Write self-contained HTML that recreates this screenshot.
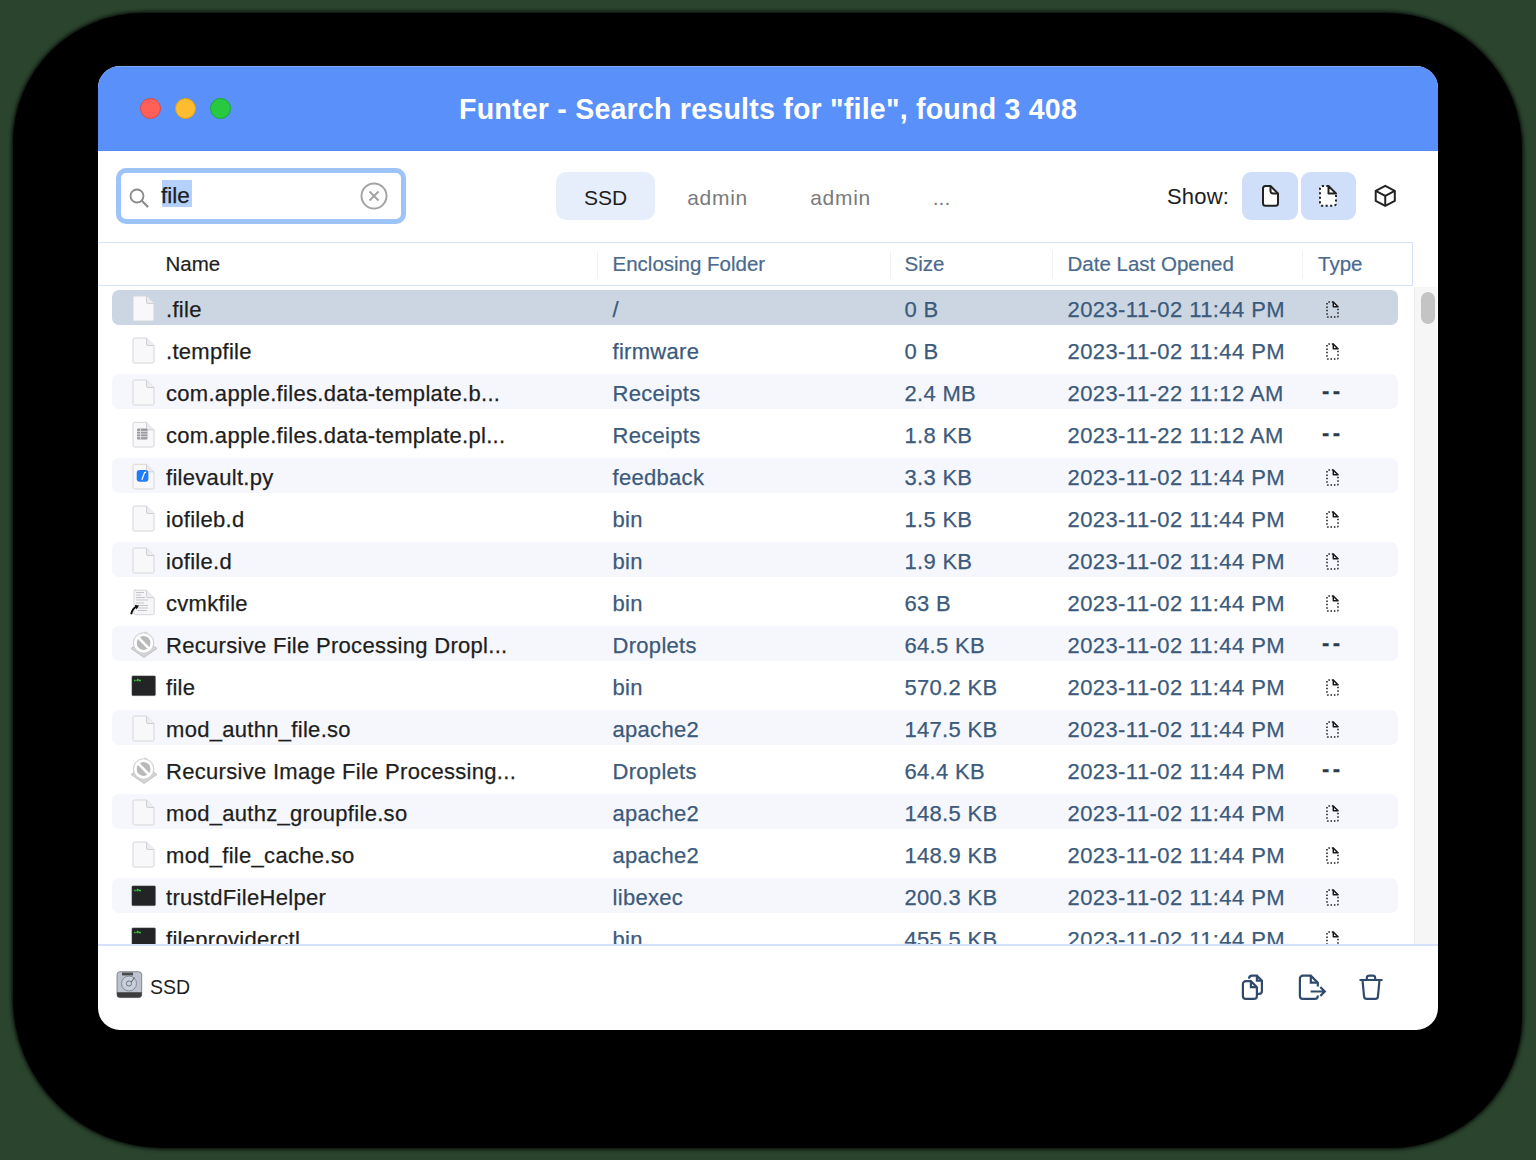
<!DOCTYPE html>
<html><head><meta charset="utf-8">
<style>
*{box-sizing:border-box;margin:0;padding:0}
html,body{width:1536px;height:1160px;overflow:hidden}
body{background:#2a442e;font-family:"Liberation Sans",sans-serif;position:relative}
#shadow{position:absolute;left:13px;top:13px;width:1509px;height:1135px;border-radius:130px 136px 132px 150px;background:#000;box-shadow:0 0 4px 1px #000}
#win{position:absolute;left:98px;top:66px;width:1340px;height:964px;border-radius:22px;background:#fff;overflow:hidden}
#title{position:absolute;left:0;top:0;width:1340px;height:84.5px;background:#5a90fa;border-top:1px solid #7ea8f9;border-bottom:1px solid #5489f7}
.tl{position:absolute;top:30.5px;width:21px;height:21px;border-radius:50%}
#ttext{position:absolute;left:0;width:1340px;top:26px;text-align:center;color:#fff;font-weight:bold;font-size:28.6px;line-height:32px;letter-spacing:0.2px}
.abs{position:absolute}
#search{position:absolute;left:18px;top:102px;width:290px;height:56px;border:5px solid #9dc3fb;border-radius:10px;background:#fff}
.tab{position:absolute;top:118.5px;font-size:21px;line-height:26px;color:#7a7a7c;text-align:center;width:120px}
#hdr{position:absolute;left:0;top:176px;width:1315px;height:44px;border-top:1.5px solid #d4e3fb;border-bottom:1.5px solid #d4e3fb;border-right:1.5px solid #d4e3fb}
.hd{position:absolute;top:9px;font-size:20.5px;line-height:24px;color:#4a6a8e;letter-spacing:0;-webkit-text-stroke:0.2px currentColor}
.vdiv{position:absolute;top:8px;width:1px;height:27px;background:#f1f1f3}
.row{position:absolute;left:14px;width:1286px;height:35px;border-radius:7px}
.row.sel{background:#cbd6e2}
.row.alt{background:#f6f7fd}
.c{position:absolute;top:2px;line-height:35px;font-size:22px;color:#3c5a7b;white-space:nowrap;letter-spacing:0.3px;-webkit-text-stroke:0.25px currentColor}
.c1{left:54px;color:#1e1e20;letter-spacing:0.3px}
.c2{left:500.5px}
.c3{left:792.5px}
.c4{left:955.5px;letter-spacing:0.42px}
.c5{left:1210px}
.c5 svg{position:absolute;top:8px;left:3.5px}
.dash{position:relative;top:-3px;left:0;color:#2a3a4c;letter-spacing:3.5px;font-weight:bold}
.ic{position:absolute;left:18px;top:4px}
.ic-term{top:4px}
.ic-droplet{left:17px;top:3px}
#scroll{position:absolute;left:1316px;top:221px;width:23px;height:658px;background:#f6f6f6;border-left:1px solid #ececec}
#thumb{position:absolute;left:1323px;top:226px;width:14px;height:32px;border-radius:7px;background:#c4c4c4}
#tbot{position:absolute;left:0;top:878px;width:1340px;height:1.5px;background:#d4e3fb}
#rows{position:absolute;left:0;top:221px;width:1315px;height:657px;overflow:hidden}
</style></head><body>
<div id="shadow"></div>
<div id="win">
  <div id="title">
    <div class="tl" style="left:42px;background:#fe5f57;border:0.5px solid #e2463f"></div>
    <div class="tl" style="left:76.5px;background:#febc2e;border:0.5px solid #e1a116"></div>
    <div class="tl" style="left:111.5px;background:#28c840;border:0.5px solid #1aab29"></div>
    <div id="ttext">Funter - Search results for "file", found 3 408</div>
  </div>
  <!-- toolbar -->
  <div id="search"></div>
  <svg class="abs" style="left:30px;top:121px" width="24" height="22" viewBox="0 0 24 22"><circle cx="9" cy="9" r="6.5" fill="none" stroke="#8a8a8c" stroke-width="1.8"/><path d="M13.8 13.8L19.5 19.5" stroke="#8a8a8c" stroke-width="2.2" stroke-linecap="round"/></svg>
  <div class="abs" style="left:63.5px;top:114px;width:30.5px;height:27px;background:#b4d1fb"></div>
  <div class="abs" style="left:63px;top:116.5px;font-size:22.5px;line-height:26px;color:#1e1e20;-webkit-text-stroke:0.25px #1e1e20">file</div>
  <svg class="abs" style="left:261px;top:115px" width="30" height="30" viewBox="0 0 30 30"><circle cx="15" cy="15" r="12.5" fill="none" stroke="#a4a4a6" stroke-width="2"/><path d="M10.5 10.5L19.5 19.5M19.5 10.5L10.5 19.5" stroke="#a4a4a6" stroke-width="2"/></svg>
  <div class="abs" style="left:458px;top:105.5px;width:99px;height:48.5px;border-radius:10px;background:#e6eefc"></div>
  <div class="tab" style="left:447.5px;color:#1e1e20">SSD</div>
  <div class="tab" style="left:559.6px;letter-spacing:0.7px">admin</div>
  <div class="tab" style="left:682.6px;letter-spacing:0.7px">admin</div>
  <div class="tab" style="left:783.5px">...</div>
  <div class="abs" style="left:1069px;top:117.5px;font-size:22px;line-height:26px;color:#1e1e20;letter-spacing:0.2px">Show:</div>
  <div class="abs" style="left:1144px;top:105.5px;width:55.5px;height:48.5px;border-radius:9px;background:#cfdffa"></div>
  <div class="abs" style="left:1202.5px;top:105.5px;width:55px;height:48.5px;border-radius:9px;background:#cfdffa"></div>
  <svg class="abs" style="left:1161px;top:117px" width="22" height="26" viewBox="0 0 22 26"><path d="M6 3h5.5l7.5 7.5v9.8a2.5 2.5 0 0 1-2.5 2.5h-10a2.5 2.5 0 0 1-2.5-2.5v-14.8a2.5 2.5 0 0 1 2.5-2.5z" fill="#fff" stroke="#222" stroke-width="2" stroke-linejoin="round"/><path d="M11.5 3v5a2.5 2.5 0 0 0 2.5 2.5h5" fill="none" stroke="#222" stroke-width="2"/></svg>
  <svg class="abs" style="left:1219px;top:117px" width="22" height="26" viewBox="0 0 22 26"><path d="M11.5 3h-6a2.5 2.5 0 0 0-2.5 2.5v14.8a2.5 2.5 0 0 0 2.5 2.5h11a2.5 2.5 0 0 0 2.5-2.5v-9.8" fill="#fff" stroke="#222" stroke-width="2" stroke-dasharray="2.2 2.3"/><path d="M11.5 3l7.5 7.5h-7.5z" fill="#fff" stroke="#222" stroke-width="2" stroke-linejoin="round"/></svg>
  <svg class="abs" style="left:1275px;top:117px" width="25" height="26" viewBox="0 0 25 26"><path d="M12.25 2.8L21.8 7.8v10L12.25 22.8L2.7 17.8v-10z" fill="none" stroke="#222" stroke-width="2" stroke-linejoin="round"/><path d="M2.7 7.8l9.55 5L21.8 7.8M12.25 12.8v10" fill="none" stroke="#222" stroke-width="2" stroke-linejoin="round"/></svg>
  <!-- header -->
  <div id="hdr">
    <span class="hd" style="left:67.5px;color:#1e1e20">Name</span>
    <div class="vdiv" style="left:499px"></div>
    <span class="hd" style="left:514.5px">Enclosing Folder</span>
    <div class="vdiv" style="left:791.5px"></div>
    <span class="hd" style="left:806.5px">Size</span>
    <div class="vdiv" style="left:954px"></div>
    <span class="hd" style="left:969.5px">Date Last Opened</span>
    <div class="vdiv" style="left:1204px"></div>
    <span class="hd" style="left:1220px">Type</span>
  </div>
  <div id="rows">
<div class="row sel" style="top:3px"><div class="ic ic-doc"><svg width="27" height="30" viewBox="0 0 27 30"><path d="M4.5 2h12l7.5 7.5v16a1.5 1.5 0 0 1-1.5 1.5h-18a1.5 1.5 0 0 1-1.5-1.5v-22a1.5 1.5 0 0 1 1.5-1.5z" fill="#f8f8fa" stroke="#d6d6da" stroke-width="1"/><path d="M16.5 2v6a1.5 1.5 0 0 0 1.5 1.5h6" fill="#ececf0" stroke="#cfcfd4" stroke-width="1"/></svg></div><span class="c c1">.file</span><span class="c c2">/</span><span class="c c3">0 B</span><span class="c c4">2023-11-02 11:44 PM</span><span class="c c5"><svg width="14" height="19" viewBox="0 0 14 19"><path d="M7.3 2.1H1.7a0.7 0.7 0 0 0-0.7 0.7V16.2a0.7 0.7 0 0 0 0.7 0.7H11.3a0.7 0.7 0 0 0 0.7-0.7V6.8" fill="none" stroke="#1a1a1a" stroke-width="1.5" stroke-dasharray="1.5 1.9"/><path d="M7.3 2.1L12 6.8H7.3z" fill="#fff" stroke="#1a1a1a" stroke-width="1.5" stroke-linejoin="round"/></svg></span></div>
<div class="row" style="top:45px"><div class="ic ic-doc"><svg width="27" height="30" viewBox="0 0 27 30"><path d="M4.5 2h12l7.5 7.5v16a1.5 1.5 0 0 1-1.5 1.5h-18a1.5 1.5 0 0 1-1.5-1.5v-22a1.5 1.5 0 0 1 1.5-1.5z" fill="#f8f8fa" stroke="#d6d6da" stroke-width="1"/><path d="M16.5 2v6a1.5 1.5 0 0 0 1.5 1.5h6" fill="#ececf0" stroke="#cfcfd4" stroke-width="1"/></svg></div><span class="c c1">.tempfile</span><span class="c c2">firmware</span><span class="c c3">0 B</span><span class="c c4">2023-11-02 11:44 PM</span><span class="c c5"><svg width="14" height="19" viewBox="0 0 14 19"><path d="M7.3 2.1H1.7a0.7 0.7 0 0 0-0.7 0.7V16.2a0.7 0.7 0 0 0 0.7 0.7H11.3a0.7 0.7 0 0 0 0.7-0.7V6.8" fill="none" stroke="#1a1a1a" stroke-width="1.5" stroke-dasharray="1.5 1.9"/><path d="M7.3 2.1L12 6.8H7.3z" fill="#fff" stroke="#1a1a1a" stroke-width="1.5" stroke-linejoin="round"/></svg></span></div>
<div class="row alt" style="top:87px"><div class="ic ic-doc"><svg width="27" height="30" viewBox="0 0 27 30"><path d="M4.5 2h12l7.5 7.5v16a1.5 1.5 0 0 1-1.5 1.5h-18a1.5 1.5 0 0 1-1.5-1.5v-22a1.5 1.5 0 0 1 1.5-1.5z" fill="#f8f8fa" stroke="#d6d6da" stroke-width="1"/><path d="M16.5 2v6a1.5 1.5 0 0 0 1.5 1.5h6" fill="#ececf0" stroke="#cfcfd4" stroke-width="1"/></svg></div><span class="c c1">com.apple.files.data-template.b...</span><span class="c c2">Receipts</span><span class="c c3">2.4 MB</span><span class="c c4">2023-11-22 11:12 AM</span><span class="c c5"><span class="dash">--</span></span></div>
<div class="row" style="top:129px"><div class="ic ic-plist"><svg width="27" height="30" viewBox="0 0 27 30"><path d="M4.5 2.3h12l7.5 7.5v15.7a1.5 1.5 0 0 1-1.5 1.5h-18a1.5 1.5 0 0 1-1.5-1.5v-21.7a1.5 1.5 0 0 1 1.5-1.5z" fill="#f8f8fa" stroke="#d6d6da" stroke-width="1"/><path d="M16.5 2.3v6a1.5 1.5 0 0 0 1.5 1.5h6" fill="#ececf0" stroke="#cfcfd4" stroke-width="1"/><rect x="7" y="8.5" width="10.5" height="11" rx="1" fill="#9a9a9e"/><path d="M7 11.4h10.5M7 14h10.5M7 16.7h10.5M10.5 8.5v11" stroke="#e4e4e6" stroke-width="0.9"/></svg></div><span class="c c1">com.apple.files.data-template.pl...</span><span class="c c2">Receipts</span><span class="c c3">1.8 KB</span><span class="c c4">2023-11-22 11:12 AM</span><span class="c c5"><span class="dash">--</span></span></div>
<div class="row alt" style="top:171px"><div class="ic ic-py"><svg width="27" height="30" viewBox="0 0 27 30"><path d="M4.5 2.3h12l7.5 7.5v15.7a1.5 1.5 0 0 1-1.5 1.5h-18a1.5 1.5 0 0 1-1.5-1.5v-21.7a1.5 1.5 0 0 1 1.5-1.5z" fill="#f8f8fa" stroke="#d6d6da" stroke-width="1"/><path d="M16.5 2.3v6a1.5 1.5 0 0 0 1.5 1.5h6" fill="#ececf0" stroke="#cfcfd4" stroke-width="1"/><rect x="6.7" y="8" width="11.7" height="11.7" rx="3" fill="#1f7bff"/><path d="M14.8 10l-3 8" stroke="#fff" stroke-width="1.2"/><path d="M13.8 10.2l2.2-0.6 0.2 1.6z" fill="#fff"/></svg></div><span class="c c1">filevault.py</span><span class="c c2">feedback</span><span class="c c3">3.3 KB</span><span class="c c4">2023-11-02 11:44 PM</span><span class="c c5"><svg width="14" height="19" viewBox="0 0 14 19"><path d="M7.3 2.1H1.7a0.7 0.7 0 0 0-0.7 0.7V16.2a0.7 0.7 0 0 0 0.7 0.7H11.3a0.7 0.7 0 0 0 0.7-0.7V6.8" fill="none" stroke="#1a1a1a" stroke-width="1.5" stroke-dasharray="1.5 1.9"/><path d="M7.3 2.1L12 6.8H7.3z" fill="#fff" stroke="#1a1a1a" stroke-width="1.5" stroke-linejoin="round"/></svg></span></div>
<div class="row" style="top:213px"><div class="ic ic-doc"><svg width="27" height="30" viewBox="0 0 27 30"><path d="M4.5 2h12l7.5 7.5v16a1.5 1.5 0 0 1-1.5 1.5h-18a1.5 1.5 0 0 1-1.5-1.5v-22a1.5 1.5 0 0 1 1.5-1.5z" fill="#f8f8fa" stroke="#d6d6da" stroke-width="1"/><path d="M16.5 2v6a1.5 1.5 0 0 0 1.5 1.5h6" fill="#ececf0" stroke="#cfcfd4" stroke-width="1"/></svg></div><span class="c c1">iofileb.d</span><span class="c c2">bin</span><span class="c c3">1.5 KB</span><span class="c c4">2023-11-02 11:44 PM</span><span class="c c5"><svg width="14" height="19" viewBox="0 0 14 19"><path d="M7.3 2.1H1.7a0.7 0.7 0 0 0-0.7 0.7V16.2a0.7 0.7 0 0 0 0.7 0.7H11.3a0.7 0.7 0 0 0 0.7-0.7V6.8" fill="none" stroke="#1a1a1a" stroke-width="1.5" stroke-dasharray="1.5 1.9"/><path d="M7.3 2.1L12 6.8H7.3z" fill="#fff" stroke="#1a1a1a" stroke-width="1.5" stroke-linejoin="round"/></svg></span></div>
<div class="row alt" style="top:255px"><div class="ic ic-doc"><svg width="27" height="30" viewBox="0 0 27 30"><path d="M4.5 2h12l7.5 7.5v16a1.5 1.5 0 0 1-1.5 1.5h-18a1.5 1.5 0 0 1-1.5-1.5v-22a1.5 1.5 0 0 1 1.5-1.5z" fill="#f8f8fa" stroke="#d6d6da" stroke-width="1"/><path d="M16.5 2v6a1.5 1.5 0 0 0 1.5 1.5h6" fill="#ececf0" stroke="#cfcfd4" stroke-width="1"/></svg></div><span class="c c1">iofile.d</span><span class="c c2">bin</span><span class="c c3">1.9 KB</span><span class="c c4">2023-11-02 11:44 PM</span><span class="c c5"><svg width="14" height="19" viewBox="0 0 14 19"><path d="M7.3 2.1H1.7a0.7 0.7 0 0 0-0.7 0.7V16.2a0.7 0.7 0 0 0 0.7 0.7H11.3a0.7 0.7 0 0 0 0.7-0.7V6.8" fill="none" stroke="#1a1a1a" stroke-width="1.5" stroke-dasharray="1.5 1.9"/><path d="M7.3 2.1L12 6.8H7.3z" fill="#fff" stroke="#1a1a1a" stroke-width="1.5" stroke-linejoin="round"/></svg></span></div>
<div class="row" style="top:297px"><div class="ic ic-alias"><svg width="27" height="30" viewBox="0 0 27 30"><path d="M4 2.2h12.5l7.7 7.7v15.3a1.5 1.5 0 0 1-1.5 1.5h-17.2a1.5 1.5 0 0 1-1.5-1.5v-21.5a1.5 1.5 0 0 1 1.5-1.5z" fill="#f6f6f8" stroke="#d6d6da" stroke-width="1"/><path d="M16.5 2.2v6a1.5 1.5 0 0 0 1.5 1.5h6" fill="#ececf0" stroke="#cfcfd4" stroke-width="1"/><path d="M6 4.5h8M6 7h5M6 9.5h9M6 12h12M6 15h8M6 17.5h12M8 20h10M8 22.5h9" stroke="#c4c4c8" stroke-width="1.1"/><path d="M1.2 26.2c0.8-4 2.6-6.6 6-7.8" fill="none" stroke="#111" stroke-width="2"/><path d="M4.8 16.8l4.2 1-2.6 3.6z" fill="#111"/></svg></div><span class="c c1">cvmkfile</span><span class="c c2">bin</span><span class="c c3">63 B</span><span class="c c4">2023-11-02 11:44 PM</span><span class="c c5"><svg width="14" height="19" viewBox="0 0 14 19"><path d="M7.3 2.1H1.7a0.7 0.7 0 0 0-0.7 0.7V16.2a0.7 0.7 0 0 0 0.7 0.7H11.3a0.7 0.7 0 0 0 0.7-0.7V6.8" fill="none" stroke="#1a1a1a" stroke-width="1.5" stroke-dasharray="1.5 1.9"/><path d="M7.3 2.1L12 6.8H7.3z" fill="#fff" stroke="#1a1a1a" stroke-width="1.5" stroke-linejoin="round"/></svg></span></div>
<div class="row alt" style="top:339px"><div class="ic ic-droplet"><svg width="30" height="30" viewBox="0 0 30 30"><path d="M15 10.5L28 19.5L15 28.4L2 19.5z" fill="#d4d4d6" stroke="#c4c4c6" stroke-width="1"/><circle cx="16.7" cy="4.6" r="1.6" fill="#e6e6e8" stroke="#c8c8ca" stroke-width="0.6"/><circle cx="14.6" cy="14" r="10.3" fill="#e9e9eb" stroke="#c8c8ca" stroke-width="0.8"/><circle cx="14.6" cy="14" r="7.2" fill="#b9b9bb"/><circle cx="14.6" cy="14" r="8.2" fill="none" stroke="#fff" stroke-width="2.4"/><path d="M9.2 8.4L20 19.6" stroke="#fff" stroke-width="2.6"/></svg></div><span class="c c1">Recursive File Processing Dropl...</span><span class="c c2">Droplets</span><span class="c c3">64.5 KB</span><span class="c c4">2023-11-02 11:44 PM</span><span class="c c5"><span class="dash">--</span></span></div>
<div class="row" style="top:381px"><div class="ic ic-term"><svg width="27" height="26" viewBox="0 0 27 26"><rect x="2" y="4" width="23.3" height="19.6" rx="0.8" fill="#232426"/><rect x="2" y="4" width="23.3" height="19.6" rx="0.8" fill="none" stroke="#3a3a3c" stroke-width="0.6"/><path d="M4.2 8.5h1.4M6.8 9l1.4-2.2M8.6 8.5h2.2" stroke="#2fe03c" stroke-width="1.4"/></svg></div><span class="c c1">file</span><span class="c c2">bin</span><span class="c c3">570.2 KB</span><span class="c c4">2023-11-02 11:44 PM</span><span class="c c5"><svg width="14" height="19" viewBox="0 0 14 19"><path d="M7.3 2.1H1.7a0.7 0.7 0 0 0-0.7 0.7V16.2a0.7 0.7 0 0 0 0.7 0.7H11.3a0.7 0.7 0 0 0 0.7-0.7V6.8" fill="none" stroke="#1a1a1a" stroke-width="1.5" stroke-dasharray="1.5 1.9"/><path d="M7.3 2.1L12 6.8H7.3z" fill="#fff" stroke="#1a1a1a" stroke-width="1.5" stroke-linejoin="round"/></svg></span></div>
<div class="row alt" style="top:423px"><div class="ic ic-doc"><svg width="27" height="30" viewBox="0 0 27 30"><path d="M4.5 2h12l7.5 7.5v16a1.5 1.5 0 0 1-1.5 1.5h-18a1.5 1.5 0 0 1-1.5-1.5v-22a1.5 1.5 0 0 1 1.5-1.5z" fill="#f8f8fa" stroke="#d6d6da" stroke-width="1"/><path d="M16.5 2v6a1.5 1.5 0 0 0 1.5 1.5h6" fill="#ececf0" stroke="#cfcfd4" stroke-width="1"/></svg></div><span class="c c1">mod_authn_file.so</span><span class="c c2">apache2</span><span class="c c3">147.5 KB</span><span class="c c4">2023-11-02 11:44 PM</span><span class="c c5"><svg width="14" height="19" viewBox="0 0 14 19"><path d="M7.3 2.1H1.7a0.7 0.7 0 0 0-0.7 0.7V16.2a0.7 0.7 0 0 0 0.7 0.7H11.3a0.7 0.7 0 0 0 0.7-0.7V6.8" fill="none" stroke="#1a1a1a" stroke-width="1.5" stroke-dasharray="1.5 1.9"/><path d="M7.3 2.1L12 6.8H7.3z" fill="#fff" stroke="#1a1a1a" stroke-width="1.5" stroke-linejoin="round"/></svg></span></div>
<div class="row" style="top:465px"><div class="ic ic-droplet"><svg width="30" height="30" viewBox="0 0 30 30"><path d="M15 10.5L28 19.5L15 28.4L2 19.5z" fill="#d4d4d6" stroke="#c4c4c6" stroke-width="1"/><circle cx="16.7" cy="4.6" r="1.6" fill="#e6e6e8" stroke="#c8c8ca" stroke-width="0.6"/><circle cx="14.6" cy="14" r="10.3" fill="#e9e9eb" stroke="#c8c8ca" stroke-width="0.8"/><circle cx="14.6" cy="14" r="7.2" fill="#b9b9bb"/><circle cx="14.6" cy="14" r="8.2" fill="none" stroke="#fff" stroke-width="2.4"/><path d="M9.2 8.4L20 19.6" stroke="#fff" stroke-width="2.6"/></svg></div><span class="c c1">Recursive Image File Processing...</span><span class="c c2">Droplets</span><span class="c c3">64.4 KB</span><span class="c c4">2023-11-02 11:44 PM</span><span class="c c5"><span class="dash">--</span></span></div>
<div class="row alt" style="top:507px"><div class="ic ic-doc"><svg width="27" height="30" viewBox="0 0 27 30"><path d="M4.5 2h12l7.5 7.5v16a1.5 1.5 0 0 1-1.5 1.5h-18a1.5 1.5 0 0 1-1.5-1.5v-22a1.5 1.5 0 0 1 1.5-1.5z" fill="#f8f8fa" stroke="#d6d6da" stroke-width="1"/><path d="M16.5 2v6a1.5 1.5 0 0 0 1.5 1.5h6" fill="#ececf0" stroke="#cfcfd4" stroke-width="1"/></svg></div><span class="c c1">mod_authz_groupfile.so</span><span class="c c2">apache2</span><span class="c c3">148.5 KB</span><span class="c c4">2023-11-02 11:44 PM</span><span class="c c5"><svg width="14" height="19" viewBox="0 0 14 19"><path d="M7.3 2.1H1.7a0.7 0.7 0 0 0-0.7 0.7V16.2a0.7 0.7 0 0 0 0.7 0.7H11.3a0.7 0.7 0 0 0 0.7-0.7V6.8" fill="none" stroke="#1a1a1a" stroke-width="1.5" stroke-dasharray="1.5 1.9"/><path d="M7.3 2.1L12 6.8H7.3z" fill="#fff" stroke="#1a1a1a" stroke-width="1.5" stroke-linejoin="round"/></svg></span></div>
<div class="row" style="top:549px"><div class="ic ic-doc"><svg width="27" height="30" viewBox="0 0 27 30"><path d="M4.5 2h12l7.5 7.5v16a1.5 1.5 0 0 1-1.5 1.5h-18a1.5 1.5 0 0 1-1.5-1.5v-22a1.5 1.5 0 0 1 1.5-1.5z" fill="#f8f8fa" stroke="#d6d6da" stroke-width="1"/><path d="M16.5 2v6a1.5 1.5 0 0 0 1.5 1.5h6" fill="#ececf0" stroke="#cfcfd4" stroke-width="1"/></svg></div><span class="c c1">mod_file_cache.so</span><span class="c c2">apache2</span><span class="c c3">148.9 KB</span><span class="c c4">2023-11-02 11:44 PM</span><span class="c c5"><svg width="14" height="19" viewBox="0 0 14 19"><path d="M7.3 2.1H1.7a0.7 0.7 0 0 0-0.7 0.7V16.2a0.7 0.7 0 0 0 0.7 0.7H11.3a0.7 0.7 0 0 0 0.7-0.7V6.8" fill="none" stroke="#1a1a1a" stroke-width="1.5" stroke-dasharray="1.5 1.9"/><path d="M7.3 2.1L12 6.8H7.3z" fill="#fff" stroke="#1a1a1a" stroke-width="1.5" stroke-linejoin="round"/></svg></span></div>
<div class="row alt" style="top:591px"><div class="ic ic-term"><svg width="27" height="26" viewBox="0 0 27 26"><rect x="2" y="4" width="23.3" height="19.6" rx="0.8" fill="#232426"/><rect x="2" y="4" width="23.3" height="19.6" rx="0.8" fill="none" stroke="#3a3a3c" stroke-width="0.6"/><path d="M4.2 8.5h1.4M6.8 9l1.4-2.2M8.6 8.5h2.2" stroke="#2fe03c" stroke-width="1.4"/></svg></div><span class="c c1">trustdFileHelper</span><span class="c c2">libexec</span><span class="c c3">200.3 KB</span><span class="c c4">2023-11-02 11:44 PM</span><span class="c c5"><svg width="14" height="19" viewBox="0 0 14 19"><path d="M7.3 2.1H1.7a0.7 0.7 0 0 0-0.7 0.7V16.2a0.7 0.7 0 0 0 0.7 0.7H11.3a0.7 0.7 0 0 0 0.7-0.7V6.8" fill="none" stroke="#1a1a1a" stroke-width="1.5" stroke-dasharray="1.5 1.9"/><path d="M7.3 2.1L12 6.8H7.3z" fill="#fff" stroke="#1a1a1a" stroke-width="1.5" stroke-linejoin="round"/></svg></span></div>
<div class="row" style="top:633px"><div class="ic ic-term"><svg width="27" height="26" viewBox="0 0 27 26"><rect x="2" y="4" width="23.3" height="19.6" rx="0.8" fill="#232426"/><rect x="2" y="4" width="23.3" height="19.6" rx="0.8" fill="none" stroke="#3a3a3c" stroke-width="0.6"/><path d="M4.2 8.5h1.4M6.8 9l1.4-2.2M8.6 8.5h2.2" stroke="#2fe03c" stroke-width="1.4"/></svg></div><span class="c c1">fileproviderctl</span><span class="c c2">bin</span><span class="c c3">455.5 KB</span><span class="c c4">2023-11-02 11:44 PM</span><span class="c c5"><svg width="14" height="19" viewBox="0 0 14 19"><path d="M7.3 2.1H1.7a0.7 0.7 0 0 0-0.7 0.7V16.2a0.7 0.7 0 0 0 0.7 0.7H11.3a0.7 0.7 0 0 0 0.7-0.7V6.8" fill="none" stroke="#1a1a1a" stroke-width="1.5" stroke-dasharray="1.5 1.9"/><path d="M7.3 2.1L12 6.8H7.3z" fill="#fff" stroke="#1a1a1a" stroke-width="1.5" stroke-linejoin="round"/></svg></span></div>
  </div>
  <div id="scroll"></div>
  <div id="thumb"></div>
  <div id="tbot"></div>
  <!-- footer -->
  <svg class="abs" style="left:18px;top:905px" width="27" height="28" viewBox="0 0 27 28"><rect x="1" y="0.7" width="24.7" height="25.9" rx="3" fill="#bcc3ce" stroke="#6e7278" stroke-width="0.8"/><rect x="6" y="1.6" width="11" height="2.8" fill="#4a4a4c"/><circle cx="13" cy="12.5" r="7.5" fill="#c9d0da" stroke="#858b94" stroke-width="1"/><circle cx="13" cy="12.5" r="2.6" fill="none" stroke="#6e747c" stroke-width="1"/><path d="M18.5 6.5l-3.2 4.6" stroke="#555" stroke-width="1"/><path d="M1 21.2h24.7v2.4a3 3 0 0 1-3 3h-18.7a3 3 0 0 1-3-3z" fill="#3c3c3e"/></svg>
  <div class="abs" style="left:52px;top:909px;font-size:19.5px;line-height:24px;color:#1e1e20">SSD</div>
  <svg class="abs" style="left:1142px;top:907px" width="26" height="30" viewBox="0 0 26 30"><path d="M9.1 5.7a3 3 0 0 1 3-3h4.8l5 5v10.2a3 3 0 0 1-3 3h-2.3" fill="none" stroke="#2f4a6c" stroke-width="2.2"/><path d="M16.9 2.7v5h5" fill="none" stroke="#2f4a6c" stroke-width="2.2"/><path d="M2.9 11.1a3 3 0 0 1 3-3h5l6 6v8.8a3 3 0 0 1-3 3h-8a3 3 0 0 1-3-3z" fill="#fff" stroke="#2f4a6c" stroke-width="2.2"/><path d="M10.9 8.1v6h6" fill="none" stroke="#2f4a6c" stroke-width="2.2"/></svg>
  <svg class="abs" style="left:1199px;top:907px" width="32" height="30" viewBox="0 0 32 30"><path d="M20.8 22.5v0.4a3 3 0 0 1-3 3h-11.9a3 3 0 0 1-3-3v-17.2a3 3 0 0 1 3-3h7.9l7 7v3.8" fill="none" stroke="#2f4a6c" stroke-width="2.2"/><path d="M13.8 2.7v7h7" fill="none" stroke="#2f4a6c" stroke-width="2.2"/><path d="M13.6 18.5h14M23.3 14l4.5 4.5l-4.5 4.5" fill="none" stroke="#2f4a6c" stroke-width="2.2"/></svg>
  <svg class="abs" style="left:1260px;top:907px" width="26" height="30" viewBox="0 0 26 30"><path d="M1.5 7h23" stroke="#2f4a6c" stroke-width="2.2"/><path d="M8.8 7v-2a2.5 2.5 0 0 1 2.5-2.3h3.4a2.5 2.5 0 0 1 2.5 2.3v2" fill="none" stroke="#2f4a6c" stroke-width="2.2"/><path d="M4.5 7l1.6 16.8a2.5 2.5 0 0 0 2.5 2.1h8.8a2.5 2.5 0 0 0 2.5-2.1l1.6-16.8" fill="none" stroke="#2f4a6c" stroke-width="2.2"/></svg>
</div>
</body></html>
